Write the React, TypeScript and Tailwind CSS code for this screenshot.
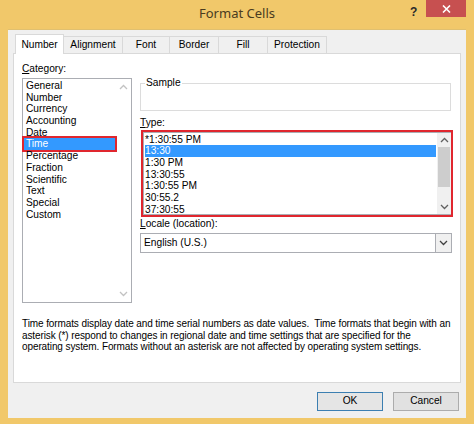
const font = { fontFamily: '"Liberation Sans", Arial, sans-serif' };

function Chevron({ up, className }: { up?: boolean; className?: string }) {
  return (
    <svg width="9" height="6" viewBox="0 0 9 6" className={className}>
      <polyline
        points={up ? "1,5 4.5,1.5 8,5" : "1,1 4.5,4.5 8,1"}
        fill="none"
        stroke="currentColor"
        strokeWidth="1.3"
      />
    </svg>
  );
}

const categories = [
  "General",
  "Number",
  "Currency",
  "Accounting",
  "Date",
  "Time",
  "Percentage",
  "Fraction",
  "Scientific",
  "Text",
  "Special",
  "Custom",
];

const types = [
  "*1:30:55 PM",
  "13:30",
  "1:30 PM",
  "13:30:55",
  "1:30:55 PM",
  "30:55.2",
  "37:30:55",
];

const tabs = ["Number", "Alignment", "Font", "Border", "Fill", "Protection"];
const tabWidths = ["w-[49px]", "w-[59px]", "w-[47px]", "w-[49px]", "w-[49px]", "w-[59px]"];

export default function App() {
  return (
    <div
      className="w-[474px] h-[424px] overflow-hidden bg-[#f1c86a] flex flex-col text-[10.2px] text-black"
      style={font}
    >
      {/* Title bar */}
      <div className="relative h-[29px] shrink-0 flex items-center justify-center">
        <span className="text-[13px] text-[#4a3b1f] -mt-[1px]" style={{ fontFamily: '"Noto Sans", sans-serif' }}>
          Format Cells
        </span>
        <span className="absolute left-[410px] top-[3px] text-[12px] font-bold text-[#2a2a2a]">?</span>
        <div className="absolute left-[426px] top-0 w-[40px] h-[17px] bg-[#c75050] flex items-center justify-center">
          <svg width="9" height="8" viewBox="0 0 9 8">
            <path d="M1 0.5 L8 7.5 M8 0.5 L1 7.5" stroke="white" strokeWidth="1.6" />
          </svg>
        </div>
      </div>

      {/* Dialog body */}
      <div className="mx-[8px] h-[389px] bg-[#f0f0f0] border-t border-[#e0c070] flex flex-col px-[5px]">
        {/* Tabs */}
        <div className="flex items-end h-[23px] pl-[2px]">
          {tabs.map((t, i) =>
            i === 0 ? (
              <div
                key={t}
                className={`${tabWidths[i]} h-[20px] bg-white border border-b-0 border-[#d9d9d9] flex items-center justify-center -mb-px relative z-10`}
              >
                {t}
              </div>
            ) : (
              <div
                key={t}
                className={`${tabWidths[i]} h-[17px] bg-[#f0f0f0] border border-l-0 border-b-0 border-[#d9d9d9] flex items-center justify-center`}
              >
                {t}
              </div>
            )
          )}
        </div>

        {/* Tab panel */}
        <div className="h-[330px] bg-white border border-[#d9d9d9] flex flex-col pt-[9px] pl-[8px]">
          <div className="flex">
            {/* Category column */}
            <div className="flex flex-col w-[110px]">
              <div className="leading-[12px]">
                <span className="underline">C</span>ategory:
              </div>
              <div className="mt-[3px] h-[225px] border border-[#abadb3] flex">
                <div className="flex-1 flex flex-col pt-[1px] pl-[1px] leading-[11.7px]">
                  {categories.map((c) =>
                    c === "Time" ? (
                      <div
                        key={c}
                        className="h-[11.7px] bg-[#3399ff] text-white px-[2px] outline-2 outline-[#e0262e] outline-offset-0 w-[91px]"
                      >
                        {c}
                      </div>
                    ) : (
                      <div key={c} className="h-[11.7px] px-[2px]">
                        {c}
                      </div>
                    )
                  )}
                </div>
                <div className="w-[17px] flex flex-col justify-between items-center py-[5px] text-[#c2c2c2]">
                  <Chevron up />
                  <Chevron />
                </div>
              </div>
            </div>

            {/* Right column */}
            <div className="flex flex-col ml-[8px] pt-[20px] w-[313px]">
              <div className="relative w-[311px] h-[28px] border border-[#dcdcdc]">
                <span className="absolute left-[4px] -top-[7px] bg-white px-[1px] leading-[12px]">
                  Sample
                </span>
              </div>

              <div className="mt-[6px] leading-[12px]">
                <span className="underline">T</span>ype:
              </div>

              <div className="mt-[1px] ml-[1px] w-[312px] h-[87px] border-2 border-[#e0262e] flex">
                <div className="flex-1 border border-[#abadb3] border-r-0 flex">
                  <div className="flex-1 flex flex-col pt-[0.5px] pl-[1px] leading-[11.7px]">
                    {types.map((t) =>
                      t === "13:30" ? (
                        <div key={t} className="h-[11.7px] bg-[#3399ff] text-white">
                          {t}
                        </div>
                      ) : (
                        <div key={t} className="h-[11.7px]">
                          {t}
                        </div>
                      )
                    )}
                  </div>
                  <div className="w-[14px] ml-[1px] bg-[#f0f0f0] flex flex-col items-center text-[#606060]">
                    <div className="h-[14px] flex items-center justify-center">
                      <Chevron up />
                    </div>
                    <div className="w-[12px] h-[40px] bg-[#cdcdcd]" />
                    <div className="flex-1" />
                    <div className="h-[14px] flex items-center justify-center">
                      <Chevron />
                    </div>
                  </div>
                </div>
              </div>

              <div className="mt-[1px] leading-[12px]">
                <span className="underline">L</span>ocale (location):
              </div>

              <div className="mt-[3px] w-[312px] h-[20px] border border-[#abadb3] flex items-center">
                <span className="flex-1 pl-[3px]">English (U.S.)</span>
                <div className="w-[16px] h-full border-l border-[#abadb3] bg-[#f0f0f0] flex items-center justify-center text-[#404040]">
                  <Chevron />
                </div>
              </div>
            </div>
          </div>

          {/* Description */}
          <p className="mt-[15px] pr-[2px] leading-[11.7px] text-[10px] tracking-[-0.1px] whitespace-nowrap">
            Time formats display date and time serial numbers as date values.&nbsp; Time formats that begin with an
            <br />
            asterisk (*) respond to changes in regional date and time settings that are specified for the
            <br />
            operating system. Formats without an asterisk are not affected by operating system settings.
          </p>
        </div>

        {/* Buttons */}
        <div className="mt-[9px] flex justify-end gap-[10px] pr-[2px]">
          <button className="w-[66px] h-[19px] border border-[#3c7fb1] bg-[#e5e5e5] leading-none">OK</button>
          <button className="w-[66px] h-[19px] border border-[#acacac] bg-[#e1e1e1] leading-none">Cancel</button>
        </div>
      </div>
    </div>
  );
}
